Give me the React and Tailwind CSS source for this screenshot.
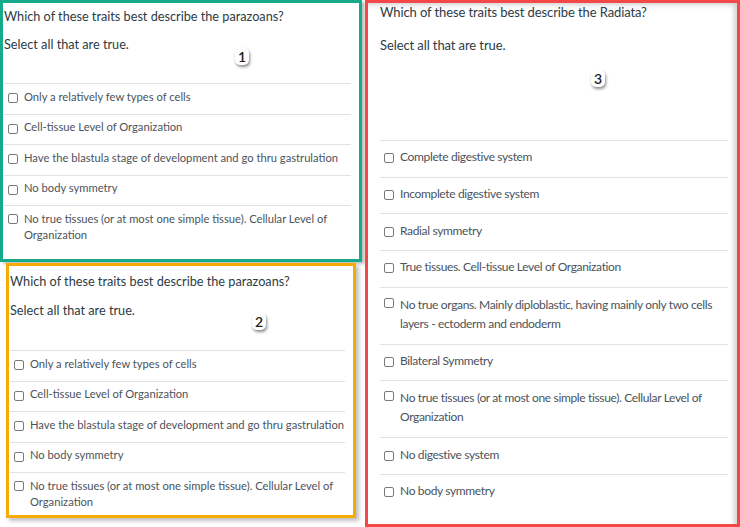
const parazoanItems = [
  ['Only a relatively few types of cells'],
  ['Cell-tissue Level of Organization'],
  ['Have the blastula stage of development and go thru gastrulation'],
  ['No body symmetry'],
  ['No true tissues (or at most one simple tissue). Cellular Level of', 'Organization'],
];

const radiataItems = [
  ['Complete digestive system'],
  ['Incomplete digestive system'],
  ['Radial symmetry'],
  ['True tissues. Cell-tissue Level of Organization'],
  ['No true organs. Mainly diploblastic, having mainly only two cells', 'layers - ectoderm and endoderm'],
  ['Bilateral Symmetry'],
  ['No true tissues (or at most one simple tissue). Cellular Level of', 'Organization'],
  ['No digestive system'],
  ['No body symmetry'],
];

function Box() {
  return <span className="mt-[3px] h-[10px] w-[10px] shrink-0 rounded-[2px] border border-[#7a7a7a] bg-white" />;
}

function Badge({ n, className }) {
  return (
    <span
      className={`absolute flex h-[17px] w-[14px] items-center justify-center rounded-[5px] bg-white text-[14px] font-semibold leading-none text-[#222] shadow-[1px_2px_3px_rgba(0,0,0,0.45)] ${className}`}
    >
      {n}
    </span>
  );
}

function SmallQuiz({ title, n, badgeClass, top, gap, spacer }) {
  return (
    <div className="flex h-full flex-col bg-white pl-px pr-[8px] font-['Lato',sans-serif]">
      <p className={`${top} text-[12.7px] leading-[18px] text-[#2d3b45]`}>{title}</p>
      <p className={`${gap} text-[12.7px] leading-[18px] text-[#2d3b45]`}>Select all that are true.</p>
      <div className={`relative ${spacer}`}>
        <Badge n={n} className={badgeClass} />
      </div>
      <ul className="flex flex-col">
        {parazoanItems.map((lines, i) => (
          <li
            key={i}
            className={`flex gap-[6px] border-t border-[#e2e2e2] pl-[4px] text-[11.2px] leading-[16px] text-[#4b535b] ${
              lines.length > 1 ? 'pt-[5px]' : 'h-[30.5px] items-center pb-[4px]'
            }`}
          >
            <Box />
            <span>
              {lines.map((l, j) => (
                <span key={j} className="block">{l}</span>
              ))}
            </span>
          </li>
        ))}
      </ul>
    </div>
  );
}

export default function App() {
  return (
    <div className="flex h-[527px] w-[740px] overflow-hidden bg-white font-['Lato',sans-serif]">
      <div className="flex w-[362px] shrink-0 flex-col">
        <div className="h-[262px] border-[3px] border-[#16a98a] shadow-[3px_2px_3px_rgba(0,0,0,0.25)]">
          <SmallQuiz
            title="Which of these traits best describe the parazoans?"
            n="1"
            top="pt-[4px]"
            gap="mt-[10px]"
            spacer="h-[30px]"
            badgeClass="left-[231px] top-[-5px]"
          />
        </div>
        <div className="ml-[6px] mt-px h-[255px] w-[350px] border-[3px] border-[#f6aa06] shadow-[3px_3px_4px_rgba(0,0,0,0.25)]">
          <SmallQuiz
            title="Which of these traits best describe the parazoans?"
            n="2"
            top="pt-[6px]"
            gap="mt-[11px]"
            spacer="h-[31px]"
            badgeClass="left-[242px] top-[-6px]"
          />
        </div>
      </div>

      <div className="ml-[3px] h-[527px] w-[375px] border-[3px] border-[#f44848]">
        <div className="flex h-full flex-col bg-white pl-[12px] pr-[9px] shadow-[inset_-5px_4px_5px_-2px_rgba(0,0,0,0.18)]">
          <p className="text-[13px] leading-[18px] text-[#2d3b45] tracking-[-0.1px]">
            Which of these traits best describe the Radiata?
          </p>
          <p className="mt-[15px] text-[13px] leading-[18px] text-[#2d3b45] tracking-[-0.1px]">
            Select all that are true.
          </p>
          <div className="relative h-[86px]">
            <Badge n="3" className="left-[211px] top-[16px]" />
          </div>
          <ul className="flex flex-col">
            {radiataItems.map((lines, i) => (
              <li
                key={i}
                className={`flex gap-[6px] border-t border-[#e2e2e2] pl-[4px] text-[12px] leading-[19px] tracking-[-0.35px] text-[#4b535b] ${
                  lines.length > 1 ? 'h-[57px] pt-[7px]' : 'h-[36.7px] items-center pb-[4px]'
                }`}
              >
                <Box />
                <span>
                  {lines.map((l, j) => (
                    <span key={j} className="block">{l}</span>
                  ))}
                </span>
              </li>
            ))}
          </ul>
        </div>
      </div>
    </div>
  );
}
